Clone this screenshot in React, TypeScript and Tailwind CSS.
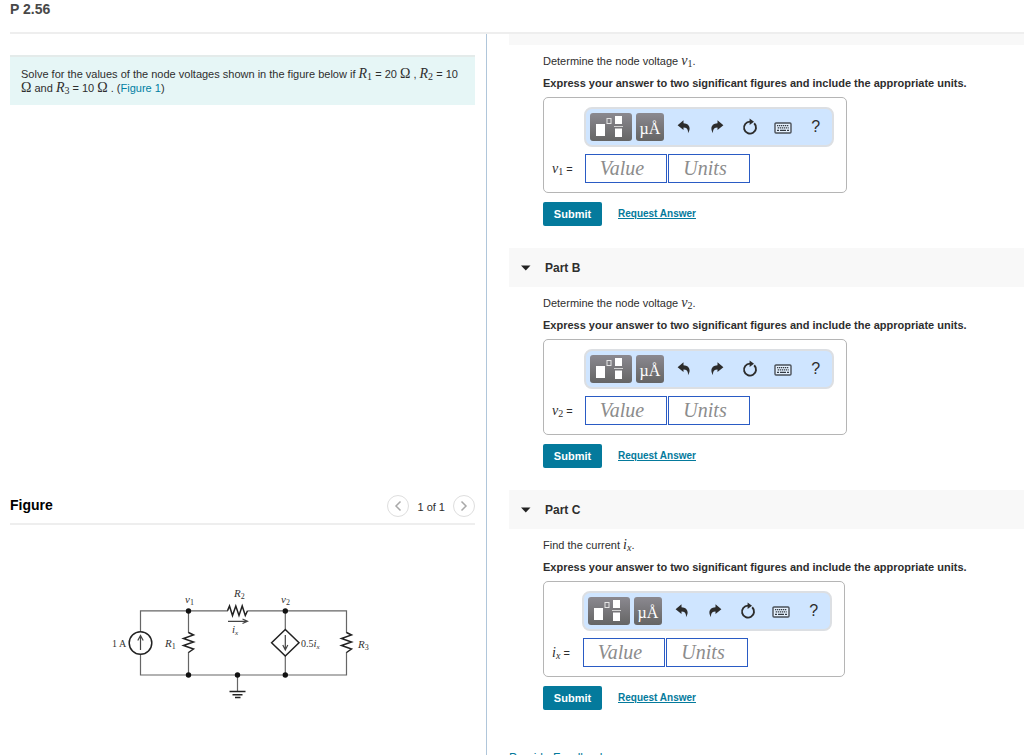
import React from "react";

type Part = {
  id: string;
  title: string;
  prompt: string;
  symbol: string;
  sub: React.ReactNode;
  labelWidth: string;
};

const parts: Part[] = [
  { id: "a", title: "Part A", prompt: "Determine the node voltage", symbol: "v", sub: "1", labelWidth: "w-8" },
  { id: "b", title: "Part B", prompt: "Determine the node voltage", symbol: "v", sub: "2", labelWidth: "w-8" },
  { id: "c", title: "Part C", prompt: "Find the current", symbol: "i", sub: <i>x</i>, labelWidth: "w-[30px]" },
];

function MathVar({ symbol, sub }: { symbol: string; sub: React.ReactNode }) {
  return (
    <span className="font-['Liberation_Serif',serif] text-[14px] leading-none whitespace-nowrap">
      <i>{symbol}</i>
      <sub className="-bottom-[2px] text-[10px]">{sub}</sub>
    </span>
  );
}

function Omega() {
  return <span className="font-['Liberation_Serif',serif] text-[14px] leading-none">Ω</span>;
}

function TemplatesIcon() {
  return (
    <svg width="42" height="28" viewBox="0 0 42 28" aria-hidden="true">
      <rect x="6" y="11" width="9" height="12" fill="#fff" />
      <rect x="17" y="5.5" width="4" height="5" fill="none" stroke="#e5e5e5" />
      <rect x="25" y="3" width="7" height="8" fill="#fff" />
      <path d="M24 13.5h9" stroke="#d4d4d4" />
      <rect x="25" y="15.5" width="7" height="8.5" fill="#fff" />
    </svg>
  );
}

function UndoIcon() {
  return (
    <svg width="14" height="14" viewBox="0 0 14 14" aria-hidden="true">
      <path d="M6.500 0.300 0.600 5.300l5.900 4.800V7.400c3.300 0 5 1.800 4.400 5.800C14.300 8.500 12.500 3.400 6.500 3.200Z" fill="#2c2c2c" />
    </svg>
  );
}

function RedoIcon() {
  return (
    <svg width="14" height="14" viewBox="0 0 14 14" aria-hidden="true">
      <path d="M7.500 0.300 13.400 5.300l-5.900 4.800V7.400c-3.300 0-5 1.800-4.400 5.800C-.3 8.500 1.500 3.400 7.500 3.200Z" fill="#2c2c2c" />
    </svg>
  );
}

function ResetIcon() {
  return (
    <svg width="16" height="18" viewBox="0 0 16 18" aria-hidden="true">
      <path d="M12.200 5.300A6 6 0 1 1 8 3.600" fill="none" stroke="#2c2c2c" strokeWidth="1.900" />
      <path d="M7.600.6 12 3.800 7.600 7Z" fill="#2c2c2c" />
    </svg>
  );
}

function KeyboardIcon() {
  return (
    <svg width="18" height="14" viewBox="0 0 18 14" aria-hidden="true">
      <rect x="1" y="3" width="16" height="10" rx="1" fill="#e3effc" stroke="#4a5058" strokeWidth="1.400" />
      <path d="M3 5.700h12M3.700 7.900h11" stroke="#333a42" strokeWidth="1.300" strokeDasharray="1.300 0.700" />
      <path d="M3 10.300h2M6 10.300h6M13 10.300h2" stroke="#333a42" strokeWidth="1.300" />
    </svg>
  );
}

function ToolButton({ label, children }: { label: string; children: React.ReactNode }) {
  return (
    <button type="button" aria-label={label} className="flex h-7 flex-1 items-center justify-center">
      {children}
    </button>
  );
}

const darkButton =
  "flex h-7 items-center justify-center rounded-[3px] bg-linear-to-b from-[#8b8990] to-[#656565] text-white";

function Toolbar() {
  return (
    <div className="flex h-10 w-[250px] items-center rounded-lg border-2 border-[#dcdfe3] bg-[#cfe5ff] pl-1">
      <button type="button" aria-label="Templates" className={`${darkButton} w-[42px]`}>
        <TemplatesIcon />
      </button>
      <button
        type="button"
        aria-label="Units"
        className={`${darkButton} ml-1 w-7 pt-[3px] font-['Liberation_Serif',serif] text-[16px]`}
      >
        µÅ
      </button>
      <div className="ml-1 flex flex-1">
        <ToolButton label="Undo"><UndoIcon /></ToolButton>
        <ToolButton label="Redo"><RedoIcon /></ToolButton>
        <ToolButton label="Reset"><ResetIcon /></ToolButton>
        <ToolButton label="Keyboard shortcuts"><KeyboardIcon /></ToolButton>
        <ToolButton label="Help">
          <span className="text-[16px] text-[#2c2c2c]">?</span>
        </ToolButton>
      </div>
    </div>
  );
}

const fieldClass =
  "h-[29px] w-[82px] border border-[#2a5bc4] bg-white pr-2 text-center font-['Liberation_Serif',serif] text-[20px] italic placeholder:text-[#8c8c8c] outline-none";

function AnswerBox({ part }: { part: Part }) {
  return (
    <div className="mt-[7px] w-fit rounded-[5px] border border-[#b5b5b5] pt-[9px] pr-3 pb-[9px] pl-2">
      <div className="flex">
        <div className={`${part.labelWidth} shrink-0`} />
        <Toolbar />
      </div>
      <div className="mt-[7px] flex items-center">
        <label htmlFor={`value-${part.id}`} className={`${part.labelWidth} shrink-0 whitespace-nowrap`}>
          <MathVar symbol={part.symbol} sub={part.sub} /> =
        </label>
        <div className="flex gap-px pl-px">
          <input id={`value-${part.id}`} placeholder="Value" className={fieldClass} />
          <input aria-label="Units" placeholder="Units" className={fieldClass} />
        </div>
      </div>
    </div>
  );
}

function PartBody({ part }: { part: Part }) {
  return (
    <div className="pt-[9px] pb-[22px] pl-[34px] leading-[14px]">
      <p className="h-[14px]">
        {part.prompt} <MathVar symbol={part.symbol} sub={part.sub} />.
      </p>
      <p className="mt-2 font-bold whitespace-nowrap">
        Express your answer to two significant figures and include the appropriate units.
      </p>
      <AnswerBox part={part} />
      <div className="mt-[9px] flex items-center gap-4">
        <button type="button" className="h-6 w-[59px] rounded-[2px] bg-[#047a9c] text-[11px] font-bold text-white">
          Submit
        </button>
        <a href="#request" className="text-[10px] font-bold text-[#047a9c] underline">
          Request Answer
        </a>
      </div>
    </div>
  );
}

function PartHeader({ title }: { title: string }) {
  return (
    <h2 className="bg-[#f8f8f8]">
      <button type="button" className="flex h-[39px] w-full items-center pl-3 text-[12px] font-bold">
        <svg width="10" height="6" viewBox="0 0 10 6" className="mr-[14px]" aria-hidden="true">
          <path d="M0 0.500h9.500L4.800 5.500Z" fill="#222" />
        </svg>
        {title}
      </button>
    </h2>
  );
}

function Circuit() {
  return (
    <svg width="280" height="125" viewBox="100 580 280 125" role="img" aria-label="Circuit diagram">
      <g fill="none" stroke="#666" strokeWidth="1.200">
        <path d="M140.500 631.500V610.800H228M247.500 610.800H346.500V633M346.500 652V675H140.500V654.500" />
        <path d="M188.500 611V633M188.500 652V675M285.300 611V629.500M285.300 656V675M237.500 675V691" />
      </g>
      <g fill="none" stroke="#222" strokeWidth="1.500">
        <circle cx="140.500" cy="643" r="11.300" />
        <path d="M285.300 629.500 299 642.800 285.300 656 271.600 642.800Z" />
        <path d="M188.500 632.500 193.500 635 183.500 638.500 193.500 642 183.500 645.500 193.500 649 188.500 652.500" />
        <path d="M346.500 632.500 351.500 635 341.500 638.500 351.500 642 341.500 645.500 351.500 649 346.500 652.500" />
        <path d="M227.500 610.800 229.500 606 232.500 615.500 235.800 606 239 615.500 242.200 606 245.300 615.500 247.500 610.800" />
        <path d="M229.500 691.500H245.500M232.500 694.700H242.500M235 697.600H240.500" />
      </g>
      <g fill="none" stroke="#444" strokeWidth="1.200">
        <path d="M140.500 650V636M137.800 640.500 140.500 635.500 143.200 640.500" />
        <path d="M285.300 635V649M282.800 645 285.300 650 287.800 645" />
        <path d="M228 621.300H247M242.500 619 247.500 621.300 242.500 623.500" />
      </g>
      <g fill="#111">
        <circle cx="188.500" cy="611" r="2.700" />
        <circle cx="285.300" cy="611" r="2.700" />
        <circle cx="188.500" cy="675" r="2.700" />
        <circle cx="237.500" cy="675" r="2.700" />
        <circle cx="285.300" cy="675" r="2.700" />
      </g>
      <g fill="#333" fontFamily="'Liberation Serif', serif" fontSize="11" fontStyle="italic">
        <text x="112" y="647" fontStyle="normal" fontSize="10">1 A</text>
        <text x="165" y="647">R<tspan fontSize="8" dy="2" fontStyle="normal">1</tspan></text>
        <text x="185" y="603">v<tspan fontSize="8" dy="2" fontStyle="normal">1</tspan></text>
        <text x="234" y="597">R<tspan fontSize="8" dy="2" fontStyle="normal">2</tspan></text>
        <text x="281" y="603">v<tspan fontSize="8" dy="2" fontStyle="normal">2</tspan></text>
        <text x="232" y="633">i<tspan fontSize="7" dy="2">x</tspan></text>
        <text x="301" y="647"><tspan fontStyle="normal" fontSize="10">0.5</tspan>i<tspan fontSize="7" dy="2">x</tspan></text>
        <text x="358" y="648">R<tspan fontSize="8" dy="2" fontStyle="normal">3</tspan></text>
      </g>
    </svg>
  );
}

function PagerButton({ label, d }: { label: string; d: string }) {
  return (
    <button
      type="button"
      aria-label={label}
      className="flex size-[22px] items-center justify-center rounded-full border border-[#dedede]"
    >
      <svg width="8" height="12" viewBox="0 0 8 12" fill="none" stroke="#a8a8a8" strokeWidth="1.500" aria-hidden="true">
        <path d={d} />
      </svg>
    </button>
  );
}

export default function App() {
  return (
    <div className="flex h-screen flex-col overflow-hidden bg-white font-['Liberation_Sans',Arial,sans-serif] text-[11px] text-[#2e2e2e]">
      <header className="ml-[10px] h-[34px] shrink-0 border-b-2 border-[#eeeeee]">
        <h1 className="text-[14px] leading-[18px] font-bold text-[#484848]">P 2.56</h1>
      </header>
      <div className="flex min-h-0 flex-1">
        <div className="flex w-[487px] shrink-0 flex-col justify-between border-r border-[#b0c6da] pr-[11px] pl-[10px]">
          <section className="mt-[21px] border-t-2 border-[#e4ebea] bg-[#e6f6f6] px-[11px] py-[10px]">
            <p className="leading-[14px]">
              Solve for the values of the node voltages shown in the figure below if <MathVar symbol="R" sub="1" /> = 20{" "}
              <Omega /> , <MathVar symbol="R" sub="2" /> = 10 <Omega /> and <MathVar symbol="R" sub="3" /> = 10 <Omega /> . (
              <a href="#figure" className="text-[#007fa3]">Figure 1</a>)
            </p>
          </section>
          <section id="figure">
            <div className="flex h-[30px] items-start justify-between border-b-2 border-[#eeeeee]">
              <h2 className="text-[14px] leading-[20px] font-bold text-black">Figure</h2>
              <div className="flex items-center gap-2">
                <PagerButton label="Previous figure" d="M6.500 1.500 2 6l4.500 4.500" />
                <span className="pt-[3px]">1 of 1</span>
                <PagerButton label="Next figure" d="M1.500 1.500 6 6l-4.500 4.500" />
              </div>
            </div>
            <div className="pt-[55px] pb-[50px] pl-[90px]">
              <Circuit />
            </div>
          </section>
        </div>
        <main className="min-w-0 flex-1 overflow-hidden pl-[22px]">
          <div className="h-[11px] bg-[#f8f8f8]" />
          {parts.map((part, index) => (
            <section key={part.id}>
              {index > 0 && <PartHeader title={part.title} />}
              <PartBody part={part} />
            </section>
          ))}
          <a href="#feedback" className="mt-[18px] block text-[12px] leading-[16px] text-[#047a9c]">
            Provide Feedback
          </a>
        </main>
      </div>
    </div>
  );
}
